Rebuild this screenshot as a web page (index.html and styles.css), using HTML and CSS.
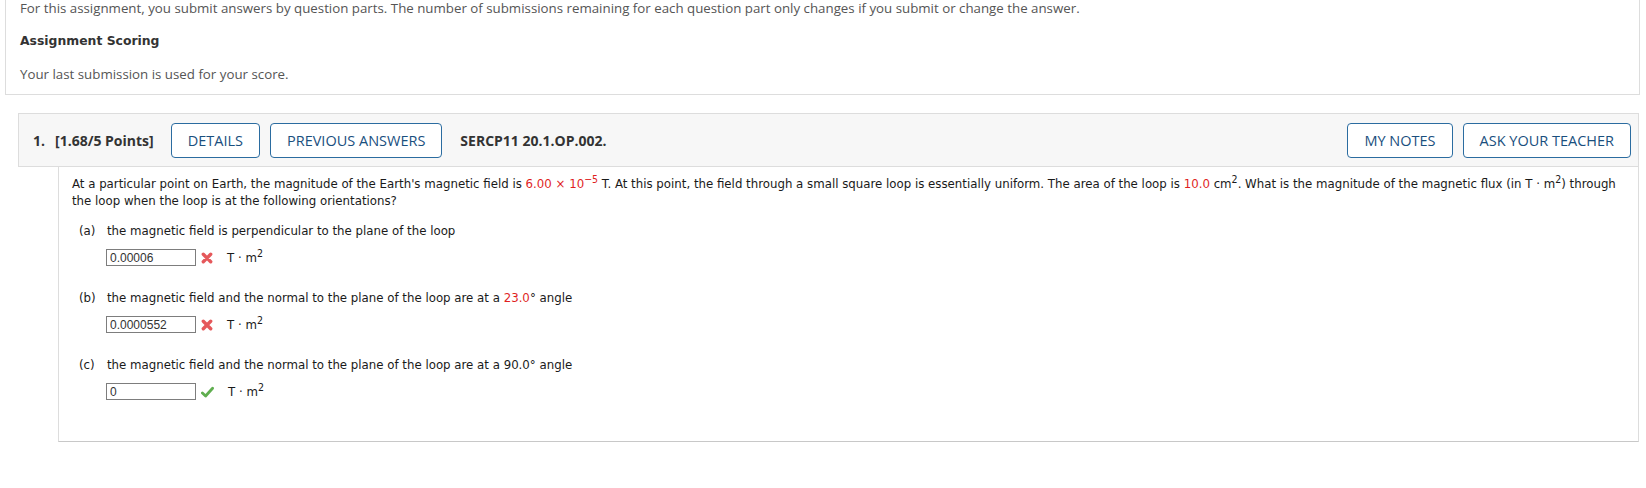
FILE: index.html
```html
<!DOCTYPE html>
<html lang="en">
<head>
<meta charset="utf-8">
<title>Assignment</title>
<link rel="stylesheet" href="styles.css">
</head>
<body>
<section class="intro">
  <p class="intro-text">For this assignment, you submit answers by question parts. The number of submissions remaining for each question part only changes if you submit or change the answer.</p>
  <h4 class="intro-title">Assignment Scoring</h4>
  <p class="intro-text">Your last submission is used for your score.</p>
</section>

<section class="question">
  <header class="qhead">
    <span class="qnum"><span class="qindex">1.</span>[1.68/5 Points]</span>
    <button class="btn">DETAILS</button>
    <button class="btn">PREVIOUS ANSWERS</button>
    <span class="qcode">SERCP11 20.1.OP.002.</span>
    <span class="spacer"></span>
    <button class="btn">MY NOTES</button>
    <button class="btn">ASK YOUR TEACHER</button>
  </header>
  <div class="qbody">
    <p class="qtext">At a particular point on Earth, the magnitude of the Earth's magnetic field is <span class="red">6.00 × 10<sup class="sup">−5</sup></span> T. At this point, the field through a small square loop is essentially uniform. The area of the loop is <span class="red">10.0</span> cm<sup class="sup">2</sup>. What is the magnitude of the magnetic flux (in T · m<sup class="sup">2</sup>) through <span>the loop when the loop is at the following orientations?</span></p>

    <div class="part">
      <div class="part-row"><span class="plabel">(a)</span><span class="ptext">the magnetic field is perpendicular to the plane of the loop</span></div>
      <div class="answer">
        <input class="ans-input" type="text" value="0.00006">
        <svg class="mark" width="12" height="12" viewBox="0 0 12 12"><path d="M2.3 2.3 L9.7 9.7 M9.7 2.3 L2.3 9.7" stroke="#e5585b" stroke-width="3.4" stroke-linecap="round"/></svg>
        <span class="unit">T · m<sup class="sup">2</sup></span>
      </div>
    </div>

    <div class="part">
      <div class="part-row"><span class="plabel">(b)</span><span class="ptext">the magnetic field and the normal to the plane of the loop are at a <span class="red">23.0</span>° angle</span></div>
      <div class="answer">
        <input class="ans-input" type="text" value="0.0000552">
        <svg class="mark" width="12" height="12" viewBox="0 0 12 12"><path d="M2.3 2.3 L9.7 9.7 M9.7 2.3 L2.3 9.7" stroke="#e5585b" stroke-width="3.4" stroke-linecap="round"/></svg>
        <span class="unit">T · m<sup class="sup">2</sup></span>
      </div>
    </div>

    <div class="part">
      <div class="part-row"><span class="plabel">(c)</span><span class="ptext">the magnetic field and the normal to the plane of the loop are at a 90.0° angle</span></div>
      <div class="answer">
        <input class="ans-input" type="text" value="0">
        <svg class="mark" width="13" height="12" viewBox="0 0 13 12"><path d="M1.4 7 L4.6 10 L11.6 2.2" stroke="#5fae4f" stroke-width="2.8" stroke-linecap="round" stroke-linejoin="round" fill="none"/></svg>
        <span class="unit">T · m<sup class="sup">2</sup></span>
      </div>
    </div>
  </div>
</section>
</body>
</html>
```

FILE: styles.css
```css
html, body {
  margin: 0;
  padding: 0;
  background: #ffffff;
}

body {
  width: 1646px;
  font-family: "Open Sans", "Liberation Sans", sans-serif;
}

.intro {
  margin: 0 6px 0 5px;
  padding: 0 14px 12px 14px;
  border: 1px solid #dddddd;
  border-top: none;
}

.intro-text {
  margin: 0;
  font-size: 13.3px;
  line-height: 16px;
  color: #555555;
}

.intro-title {
  margin: 17px 0 17px 0;
  font-family: "DejaVu Sans", "Liberation Sans", sans-serif;
  font-weight: bold;
  font-size: 12.4px;
  line-height: 16px;
  color: #333333;
}

.question {
  margin: 18px 7px 0 18px;
}

.qhead {
  display: flex;
  align-items: center;
  height: 52px;
  padding: 0 7px 0 14px;
  background: #f7f7f7;
  border: 1px solid #dddddd;
}

.qnum {
  font-size: 14px;
  font-weight: 700;
  color: #333333;
  margin-right: 17px;
}

.qindex {
  margin-right: 10px;
}

.btn {
  height: 35px;
  padding: 0 16px;
  margin-right: 10px;
  background: #ffffff;
  border: 1px solid #2b6ca0;
  border-radius: 4px;
  font-family: "Open Sans", "Liberation Sans", sans-serif;
  font-size: 14.5px;
  color: #1a4f7e;
}

.qcode {
  margin-left: 8px;
  font-size: 14px;
  font-weight: 700;
  color: #333333;
}

.spacer {
  flex: 1;
}

.qhead .btn:last-child {
  margin-right: 0;
}

.qbody {
  margin-left: 40px;
  padding: 8px 13px 41px 13px;
  border: 1px solid #dddddd;
  border-top: none;
  border-bottom-color: #c8c8c8;
  font-family: "DejaVu Sans Condensed", "DejaVu Sans", sans-serif;
  font-stretch: condensed;
  font-size: 13.1px;
  line-height: 17px;
  color: #1a1a1a;
}

.qtext {
  margin: 0 0 13px 0;
}

.red {
  color: #e01f1f;
}

.sup {
  font-size: 10.5px;
  line-height: 0;
  vertical-align: 5px;
}

.part {
  margin: 0 0 23px 7px;
}

.part:last-child {
  margin-bottom: 0;
}

.part-row {
  display: flex;
}

.plabel {
  width: 28px;
  flex: none;
}

.answer {
  display: flex;
  align-items: center;
  margin: 10px 0 0 27px;
  height: 17px;
}

.ans-input {
  box-sizing: border-box;
  width: 90px;
  height: 17px;
  margin: 0;
  padding: 0 3px;
  border: 1px solid #7d7d7d;
  font-family: "Liberation Sans", Arial, sans-serif;
  font-size: 12px;
  color: #333333;
}

.mark {
  margin-left: 5px;
  flex: none;
}

.unit {
  margin-left: 14px;
}
```
